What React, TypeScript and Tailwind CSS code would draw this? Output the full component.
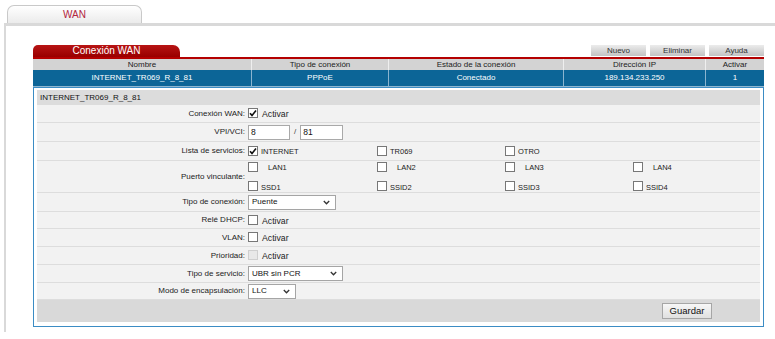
import React from 'react'

const font = "font-['Liberation_Sans',Arial,sans-serif]"

// small square checkbox like the old router UI
function Box({ checked = false, disabled = false }: { checked?: boolean; disabled?: boolean }) {
  return (
    <span
      className={`inline-flex h-[10px] w-[10px] shrink-0 items-center justify-center border ${
        disabled ? 'border-[#cfcfcf] bg-[#e8e8e8]' : 'border-[#777777] bg-white'
      }`}
    >
      {checked && (
        <svg width="8" height="8" viewBox="0 0 8 8">
          <path d="M1 4.2 L3 6.4 L7 1.4" fill="none" stroke="#111" strokeWidth="1.6" />
        </svg>
      )}
    </span>
  )
}

function Opt({ label, checked = false, wide = false }: { label: string; checked?: boolean; wide?: boolean }) {
  return (
    <div className="flex items-center">
      <Box checked={checked} />
      <span className={`${wide ? 'ml-[10px]' : 'ml-[3px]'} mt-[2px] text-[7.5px] text-[#222]`}>{label}</span>
    </div>
  )
}

function Activar({ checked = false, disabled = false }: { checked?: boolean; disabled?: boolean }) {
  return (
    <div className="flex items-center">
      <Box checked={checked} disabled={disabled} />
      <span className="ml-[4px] mt-[3px] text-[8.7px] text-[#222]">Activar</span>
    </div>
  )
}

function Select({ value, w }: { value: string; w: string }) {
  return (
    <div className={`flex h-[15px] ${w} items-center justify-between border border-[#a5a5a5] bg-white pl-[3px] pr-[5px] text-[8px] text-[#111]`}>
      <span>{value}</span>
      <svg width="7" height="5" viewBox="0 0 7 5">
        <path d="M0.8 1 L3.5 3.8 L6.2 1" fill="none" stroke="#333" strokeWidth="1.3" />
      </svg>
    </div>
  )
}

function Row({ label, h, children }: { label: string; h: string; children: React.ReactNode }) {
  return (
    <div className={`flex ${h} border-b border-[#dddddd] bg-[#f2f2f2]`}>
      <div className="flex w-[211px] shrink-0 items-center justify-end pr-[3px] text-[8px] text-[#222]">{label}</div>
      <div className="flex flex-1 items-center">{children}</div>
    </div>
  )
}

const cols = [
  { name: 'Nombre', value: 'INTERNET_TR069_R_8_81', w: 'w-[218px]' },
  { name: 'Tipo de conexión', value: 'PPPoE', w: 'w-[137px]' },
  { name: 'Estado de la conexión', value: 'Conectado', w: 'w-[175px]' },
  { name: 'Dirección IP', value: '189.134.233.250', w: 'w-[142px]' },
  { name: 'Activar', value: '1', w: 'w-[59px]' },
]

export default function App() {
  return (
    <div className={`h-[339px] w-[775px] overflow-hidden bg-white ${font}`}>
      {/* top WAN tab */}
      <div className="pl-[7px] pt-[5px]">
        <div className="flex h-[18px] w-[135px] items-center justify-center rounded-t-[7px] border border-b-0 border-[#c9c9c9] bg-gradient-to-b from-white to-[#ebebeb] text-[10px] text-[#b3263e]">
          WAN
        </div>
      </div>

      <div className="ml-[4px] h-[309px] border-l-2 border-t-[3px] border-[#d9d9d9] pl-[27px] pt-[19px]">
        <div className="w-[731px]">
          {/* section tab + buttons */}
          <div className="flex h-[14px] items-start justify-between border-b-2 border-[#b40000]">
            <div className="flex h-[12px] w-[147px] items-center justify-center rounded-t-[5px] rounded-tr-[7px] bg-gradient-to-b from-[#b81414] to-[#990000] text-[10px] leading-none text-white">
              Conexión WAN
            </div>
            <div className="flex gap-[4px]">
              {['Nuevo', 'Eliminar', 'Ayuda'].map((b) => (
                <div
                  key={b}
                  className="flex h-[11px] w-[55px] items-center justify-center bg-gradient-to-b from-[#ececec] to-[#c3c3c3] text-[8px] leading-none text-[#333]"
                >
                  {b}
                </div>
              ))}
            </div>
          </div>

          {/* connections table */}
          <div className="flex h-[11px] bg-[#d3d3d3]">
            {cols.map((c, i) => (
              <div
                key={c.name}
                className={`${c.w} flex items-center justify-center text-[8px] leading-none text-[#222] ${i > 0 ? 'border-l border-[#efefef]' : ''}`}
              >
                {c.name}
              </div>
            ))}
          </div>
          <div className="flex h-[17px] border-b border-[#8fb6cf] bg-[#0c6597]">
            {cols.map((c, i) => (
              <div
                key={c.name}
                className={`${c.w} flex items-center justify-center text-[8px] leading-none text-white ${i > 0 ? 'border-l border-[#8ab4cf]' : ''}`}
              >
                {c.value}
              </div>
            ))}
          </div>

          {/* detail panel */}
          <div className="border border-[#3b8cc4] px-[3px] pb-[4px] pt-[2px]">
            <div className="flex h-[15px] items-center bg-[#dcdcdc] pl-[3px] text-[8px] text-[#111]">INTERNET_TR069_R_8_81</div>

            <Row label="Conexión WAN:" h="h-[18px]">
              <Activar checked />
            </Row>

            <Row label="VPI/VCI:" h="h-[19px]">
              <div className="flex h-[15px] w-[42px] items-center border border-[#a9a9a9] bg-white pl-[2px] text-[8.5px] text-[#111]">8</div>
              <span className="mx-[4px] text-[8px] text-[#444]">/</span>
              <div className="flex h-[15px] w-[43px] items-center border border-[#a9a9a9] bg-white pl-[2px] text-[8.5px] text-[#111]">81</div>
            </Row>

            <Row label="Lista de servicios:" h="h-[19px]">
              <div className="grid grid-cols-[129px_128px_128px]">
                <Opt label="INTERNET" checked />
                <Opt label="TR069" />
                <Opt label="OTRO" />
              </div>
            </Row>

            <Row label="Puerto vinculante:" h="h-[32px]">
              <div className="grid grid-cols-[129px_128px_128px_120px] gap-y-[6px]">
                <Opt label="LAN1" wide />
                <Opt label="LAN2" wide />
                <Opt label="LAN3" wide />
                <Opt label="LAN4" wide />
                <Opt label="SSD1" />
                <Opt label="SSID2" />
                <Opt label="SSID3" />
                <Opt label="SSID4" />
              </div>
            </Row>

            <Row label="Tipo de conexión:" h="h-[19px]">
              <Select value="Puente" w="w-[88px]" />
            </Row>

            <Row label="Relé DHCP:" h="h-[17px]">
              <Activar />
            </Row>

            <Row label="VLAN:" h="h-[18px]">
              <Activar />
            </Row>

            <Row label="Prioridad:" h="h-[18px]">
              <Activar disabled />
            </Row>

            <Row label="Tipo de servicio:" h="h-[18px]">
              <Select value="UBR sin PCR" w="w-[95px]" />
            </Row>

            <Row label="Modo de encapsulación:" h="h-[17px]">
              <Select value="LLC" w="w-[48px]" />
            </Row>

            <div className="flex h-[22px] items-center justify-end bg-[#d9d9d9] pr-[48px]">
              <div className="flex h-[16px] w-[50px] items-center justify-center border border-[#a6a6a6] bg-gradient-to-b from-[#f7f7f7] to-[#e0e0e0] text-[9.5px] text-[#111]">
                Guardar
              </div>
            </div>
          </div>
        </div>
      </div>
    </div>
  )
}
